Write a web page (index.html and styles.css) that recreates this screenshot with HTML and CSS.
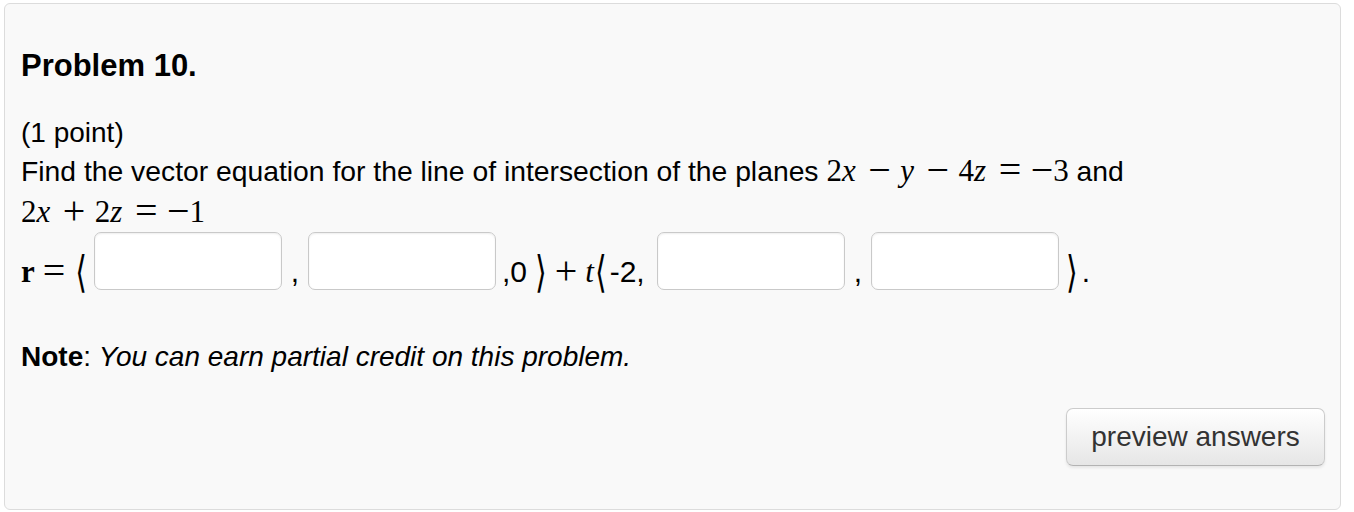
FILE: index.html
```html
<!DOCTYPE html>
<html lang="en">
<head>
<meta charset="utf-8">
<title>Problem 10</title>
<link rel="stylesheet" href="styles.css">
</head>
<body>
<div class="problem">
  <h3 class="title">Problem 10.</h3>
  <div class="points">(1 point)</div>
  <div class="statement">Find the vector equation for the line of intersection of the planes <span class="math"><span class="n">2</span><span class="v">x</span><span class="op">−</span><span class="v">y</span><span class="op">−</span><span class="n">4</span><span class="v">z</span><span class="op">=</span><span class="un">−</span><span class="n">3</span></span> and<br><span class="math"><span class="n">2</span><span class="v">x</span><span class="op">+</span><span class="n">2</span><span class="v">z</span><span class="op">=</span><span class="un">−</span><span class="n">1</span></span></div>
  <div class="answer-row">
    <span class="seg seg-lead"><span class="math"><span class="b">r</span><span class="op op-eq">=</span><span class="ang">⟨</span></span></span>
    <input class="ans" type="text" aria-label="answer 1">
    <span class="seg seg-sep">,</span>
    <input class="ans" type="text" aria-label="answer 2">
    <span class="seg seg-mid"><span class="t-zero">,0</span><span class="math"><span class="ang ang-close">⟩</span><span class="op op-plus">+</span><span class="v v-t">t</span><span class="ang">⟨</span></span><span class="t-two">-2,</span></span>
    <input class="ans" type="text" aria-label="answer 3">
    <span class="seg seg-sep">,</span>
    <input class="ans" type="text" aria-label="answer 4">
    <span class="seg seg-end"><span class="math"><span class="ang">⟩</span></span><span class="t-dot">.</span></span>
  </div>
  <div class="note"><b>Note</b>: <i>You can earn partial credit on this problem.</i></div>
  <div class="actions"><button class="btn" type="button">preview answers</button></div>
</div>
</body>
</html>
```

FILE: styles.css
```css
html, body {
  margin: 0;
  padding: 0;
  background: #ffffff;
}

body {
  font-family: "Liberation Sans", Arial, Helvetica, sans-serif;
  color: #000;
}

.problem {
  margin: 3px 13px 0 4px;
  height: 507px;
  box-sizing: border-box;
  border: 1px solid #dcdcdc;
  border-radius: 6px;
  background: #f9f9f9;
  padding: 0 15px 0 16px;
  overflow: hidden;
}

.title {
  margin: 44px 0 0;
  font-size: 31px;
  line-height: 36px;
  font-weight: bold;
}

.points {
  margin-top: 31px;
  font-size: 28px;
  line-height: 36px;
}

.statement {
  font-size: 28.3px;
  line-height: 41px;
}

/* math */
.math {
  font-family: "Liberation Serif", "Times New Roman", serif;
  font-size: 31px;
  line-height: 0;
  white-space: nowrap;
}

.math .v {
  font-style: italic;
  padding-right: 3px;
}

.math .op {
  font-size: 40px;
  margin: 0 9.5px;
  vertical-align: -2px;
}

.math .un {
  font-size: 40px;
  vertical-align: -2px;
}

.math .b {
  font-weight: bold;
}

.math .ang {
  display: inline-block;
  font-family: "DejaVu Serif", "DejaVu Sans", serif;
  font-size: 30px;
  line-height: 1;
  transform: scaleY(1.45);
}

/* answer row */
.answer-row {
  margin-top: -1px;
  display: flex;
  align-items: flex-end;
  height: 58px;
}

.seg {
  flex: none;
  font-size: 30px;
  line-height: 36px;
  white-space: nowrap;
}

.seg-lead { width: 73px; }
.seg-lead .op-eq { margin: 0 10px 0 8px; }

.seg-sep {
  width: 26px;
  text-align: center;
}

.seg-mid { width: 161px; padding-left: 6px; box-sizing: border-box; }
.seg-mid .ang-close { margin-left: 8px; }
.seg-mid .op-plus { margin: 0 8px 0 8px; }
.seg-mid .v-t { padding-right: 1px; }
.seg-mid .t-two { margin-left: 3px; }

.seg-end { padding-left: 7px; }
.seg-end .t-dot { margin-left: 4px; }

.ans {
  flex: none;
  width: 188px;
  height: 58px;
  box-sizing: border-box;
  margin: 0;
  padding: 0 10px;
  border: 1px solid #c9c9c9;
  border-radius: 7px;
  background: #fff;
  box-shadow: inset 0 1px 2px rgba(0, 0, 0, 0.07);
  font-family: "Liberation Sans", Arial, sans-serif;
  font-size: 28px;
  outline: none;
}

.note {
  margin-top: 48px;
  font-size: 28px;
  line-height: 38px;
}

.actions {
  margin-top: 32px;
  display: flex;
  justify-content: flex-end;
}

.btn {
  width: 259px;
  height: 58px;
  margin: 0;
  padding: 0;
  font-family: "Liberation Sans", Arial, sans-serif;
  font-size: 28px;
  color: #333;
  background: linear-gradient(to bottom, #ffffff, #e6e6e6);
  border: 1px solid #cccccc;
  border-bottom-color: #b3b3b3;
  border-radius: 7px;
  box-shadow: inset 0 1px 0 rgba(255, 255, 255, 0.2), 0 2px 3px rgba(0, 0, 0, 0.08);
  cursor: pointer;
}
```
